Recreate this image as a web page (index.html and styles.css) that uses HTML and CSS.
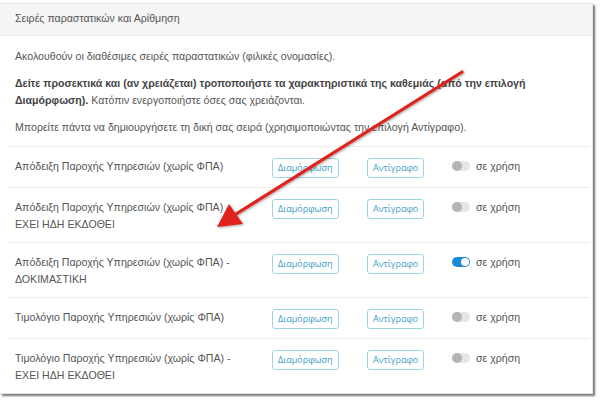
FILE: index.html
```html
<!DOCTYPE html>
<html lang="el">
<head>
<meta charset="utf-8">
<link rel="stylesheet" href="styles.css">
</head>
<body>
<div class="card">
  <div class="card-header">Σειρές παραστατικών και Αρίθμηση</div>
  <div class="card-body">
    <p class="intro">Ακολουθούν οι διαθέσιμες σειρές παραστατικών (φιλικές ονομασίες).</p>
    <p class="intro"><b>Δείτε προσεκτικά και (αν χρειάζεται) τροποποιήστε τα χαρακτηριστικά της καθεμιάς (από την επιλογή Διαμόρφωση).</b> Κατόπιν ενεργοποιήστε όσες σας χρειάζονται.</p>
    <p class="intro">Μπορείτε πάντα να δημιουργήσετε τη δική σας σειρά (χρησιμοποιώντας την επιλογή Αντίγραφο).</p>
  </div>
  <div class="table">
    <div class="row">
      <div class="cell name">Απόδειξη Παροχής Υπηρεσιών (χωρίς ΦΠΑ)</div>
      <div class="cell"><span class="btn">Διαμόρφωση</span></div>
      <div class="cell"><span class="btn">Αντίγραφο</span></div>
      <div class="cell use"><span class="toggle"></span><span>σε χρήση</span></div>
    </div>
    <div class="row">
      <div class="cell name">Απόδειξη Παροχής Υπηρεσιών (χωρίς ΦΠΑ) -<br>ΕΧΕΙ ΗΔΗ ΕΚΔΟΘΕΙ</div>
      <div class="cell"><span class="btn">Διαμόρφωση</span></div>
      <div class="cell"><span class="btn">Αντίγραφο</span></div>
      <div class="cell use"><span class="toggle"></span><span>σε χρήση</span></div>
    </div>
    <div class="row">
      <div class="cell name">Απόδειξη Παροχής Υπηρεσιών (χωρίς ΦΠΑ) -<br>ΔΟΚΙΜΑΣΤΙΚΗ</div>
      <div class="cell"><span class="btn">Διαμόρφωση</span></div>
      <div class="cell"><span class="btn">Αντίγραφο</span></div>
      <div class="cell use"><span class="toggle on"></span><span>σε χρήση</span></div>
    </div>
    <div class="row">
      <div class="cell name">Τιμολόγιο Παροχής Υπηρεσιών (χωρίς ΦΠΑ)</div>
      <div class="cell"><span class="btn">Διαμόρφωση</span></div>
      <div class="cell"><span class="btn">Αντίγραφο</span></div>
      <div class="cell use"><span class="toggle"></span><span>σε χρήση</span></div>
    </div>
    <div class="row">
      <div class="cell name">Τιμολόγιο Παροχής Υπηρεσιών (χωρίς ΦΠΑ) -<br>ΕΧΕΙ ΗΔΗ ΕΚΔΟΘΕΙ</div>
      <div class="cell"><span class="btn">Διαμόρφωση</span></div>
      <div class="cell"><span class="btn">Αντίγραφο</span></div>
      <div class="cell use"><span class="toggle"></span><span>σε χρήση</span></div>
    </div>
  </div>
</div>
<svg class="arrow" width="600" height="400" viewBox="0 0 600 400">
  <defs>
    <filter id="sh" x="-10%" y="-10%" width="120%" height="120%">
      <feDropShadow dx="1" dy="1" stdDeviation="1" flood-color="#000" flood-opacity="0.35"/>
    </filter>
  </defs>
  <g filter="url(#sh)">
    <line x1="462" y1="72" x2="236" y2="214" stroke="#e0201c" stroke-width="3.2" stroke-linecap="round"/>
    <polygon points="217,227 229,204 243,224" fill="#e0201c"/>
  </g>
</svg>
</body>
</html>
```
FILE: styles.css
```css
html, body {
  margin: 0;
  padding: 0;
  background: #ffffff;
}
body {
  font-family: "Liberation Sans", Arial, sans-serif;
  font-size: 10.6px;
  color: #555555;
  width: 600px;
  height: 400px;
  overflow: hidden;
  position: relative;
}
.card {
  margin: 3px 7px 0 0;
  width: 593px;
  border: 1px solid #e4e4e4;
  border-left: none;
  background: #ffffff;
  box-shadow: 2px 2px 2px rgba(0,0,0,0.55);
  box-sizing: border-box;
}
.card-header {
  background: #f5f5f5;
  height: 31px;
  line-height: 29px;
  padding-left: 15px;
  border-bottom: 1px solid #ececec;
}
.card-body {
  padding: 12px 15px 0 15px;
}
.intro {
  margin: 0 0 10px 0;
  line-height: 17px;
}
.intro b {
  color: #444444;
}
.table {
  margin: 0 2px 0 7px;
  border-top: 1px solid #ececec;
}
.row {
  display: grid;
  grid-template-columns: 257px 95px 85px 1fr;
  border-bottom: 1px solid #ececec;
}
.row:last-child {
  border-bottom: none;
}
.cell {
  padding: 11px 8px 9px 8px;
  line-height: 17px;
}
.btn {
  display: inline-block;
  height: 20px;
  line-height: 18px;
  box-sizing: border-box;
  padding: 0 5px;
  border: 1px solid #9fd2e2;
  border-radius: 3px;
  color: #3a9cc4;
  font-size: 9px;
  font-family: "Open Sans", "Liberation Sans", sans-serif;
}
.use {
  display: flex;
  align-items: flex-start;
  gap: 6px;
}
.toggle {
  position: relative;
  width: 18px;
  height: 10px;
  margin-top: 3px;
  border-radius: 5px;
  background: #e6e6e6;
  flex: none;
}
.toggle::after {
  content: "";
  position: absolute;
  left: 0;
  top: 0;
  width: 10px;
  height: 10px;
  border-radius: 50%;
  background: #b5b5b5;
}
.toggle.on {
  background: #1a8ad6;
}
.toggle.on::after {
  left: auto;
  right: 1px;
  top: 1px;
  width: 8px;
  height: 8px;
  background: #ffffff;
}
.arrow {
  position: absolute;
  left: 0;
  top: 0;
  pointer-events: none;
}
```
